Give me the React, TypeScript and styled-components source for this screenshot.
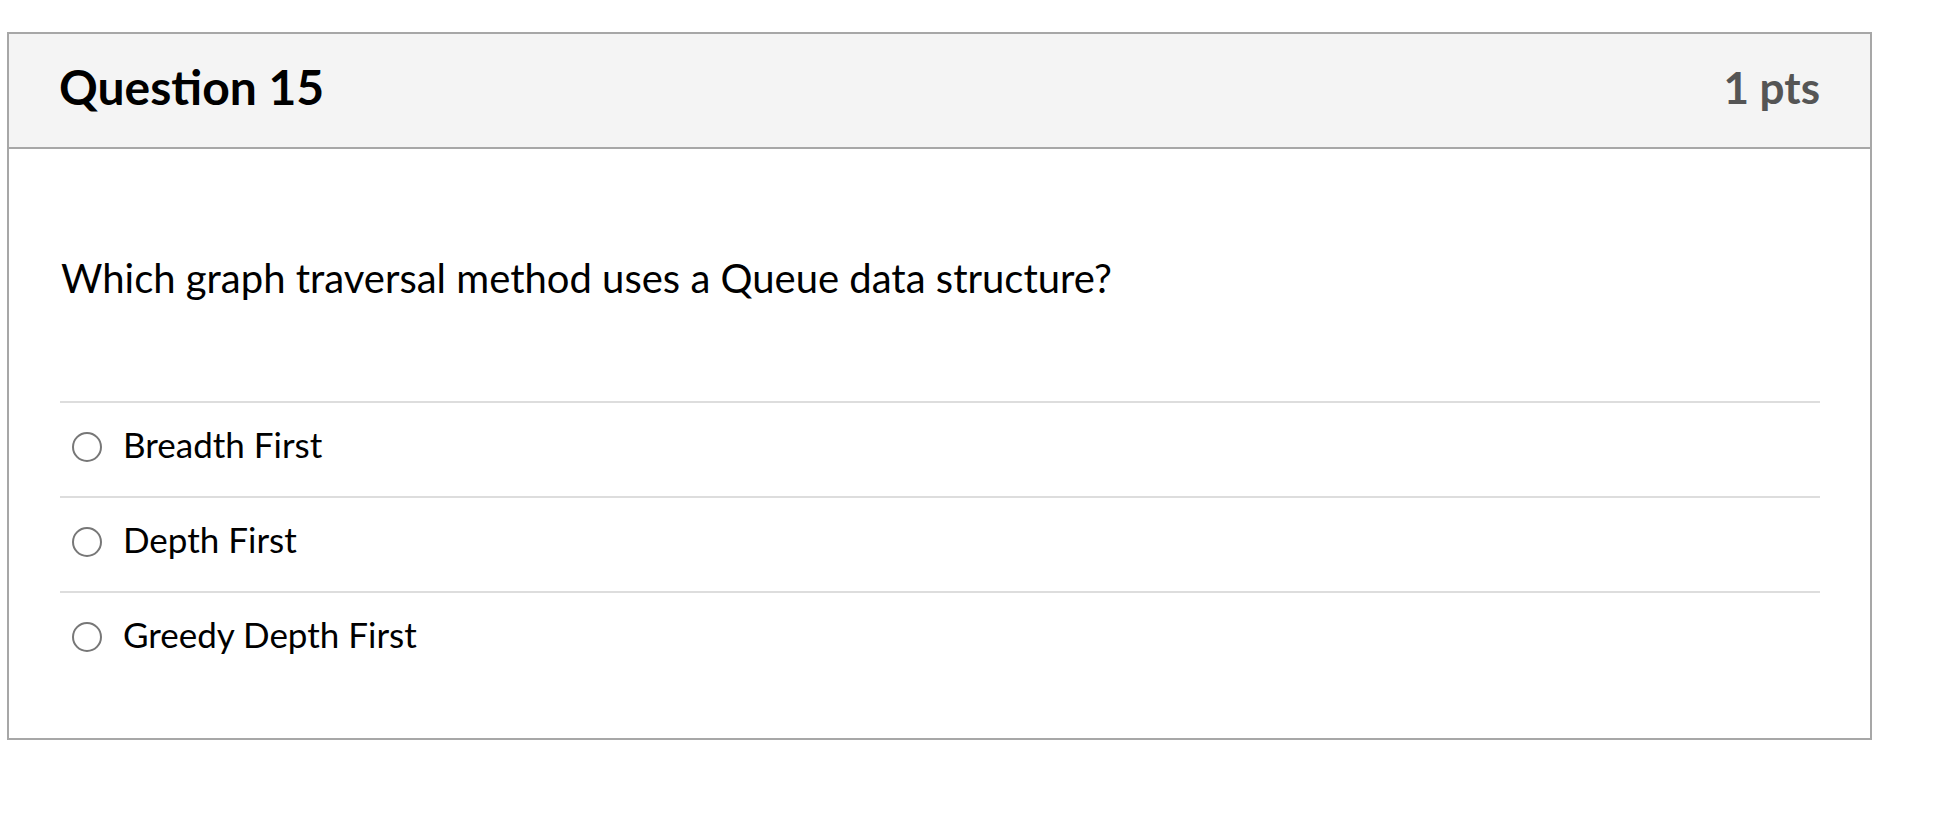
import React from "react";
import styled, { createGlobalStyle } from "styled-components";

const Global = createGlobalStyle`
  html, body { margin: 0; padding: 0; background: #ffffff; }
  body { font-family: Lato, "Open Sans", "Liberation Sans", sans-serif; color: #000; }
`;

const Page = styled.div`
  padding: 32px 0 0 7px;
`;

const Card = styled.section`
  box-sizing: border-box;
  width: 1865px;
  height: 708px;
  border: 2px solid #a7a7a7;
  display: flex;
  flex-direction: column;
`;

const Header = styled.header`
  box-sizing: border-box;
  height: 115px;
  background: #f4f4f4;
  border-bottom: 2px solid #a7a7a7;
  display: flex;
  align-items: center;
  justify-content: space-between;
  padding: 0 50px 0 50px;
`;

const Title = styled.h2`
  margin: -8px 0 0 0;
  font-family: Lato, sans-serif;
  font-weight: 700;
  font-size: 48px;
  color: #000;
`;

const Points = styled.div`
  margin-top: -8px;
  font-family: Lato, sans-serif;
  font-weight: 700;
  font-size: 44px;
  color: #555555;
`;

const Body = styled.div`
  flex: 1;
  padding: 0 50px 0 51px;
  display: flex;
  flex-direction: column;
`;

const QuestionText = styled.p`
  margin: 105px 0 0 0;
  font-size: 40px;
  line-height: 48px;
  padding-left: 1px;
`;

const Answers = styled.div`
  margin-top: 99px;
  display: flex;
  flex-direction: column;
`;

const AnswerRow = styled.label`
  box-sizing: border-box;
  height: 95px;
  border-top: 2px solid #dddddd;
  display: flex;
  align-items: center;
  padding-left: 12px;
  gap: 21px;
`;

const Radio = styled.span`
  box-sizing: border-box;
  width: 30px;
  height: 30px;
  border-radius: 50%;
  border: 2px solid #777777;
  background: #fff;
  flex: none;
  margin-top: -5px;
`;

const AnswerText = styled.span`
  font-size: 35px;
  line-height: 42px;
  margin-top: -11px;
`;

const answers = ["Breadth First", "Depth First", "Greedy Depth First"];

export default function App() {
  return (
    <>
      <Global />
      <Page>
        <Card>
          <Header>
            <Title>Question 15</Title>
            <Points>1 pts</Points>
          </Header>
          <Body>
            <QuestionText>Which graph traversal method uses a Queue data structure?</QuestionText>
            <Answers>
              {answers.map((a) => (
                <AnswerRow key={a}>
                  <Radio />
                  <AnswerText>{a}</AnswerText>
                </AnswerRow>
              ))}
            </Answers>
          </Body>
        </Card>
      </Page>
    </>
  );
}
